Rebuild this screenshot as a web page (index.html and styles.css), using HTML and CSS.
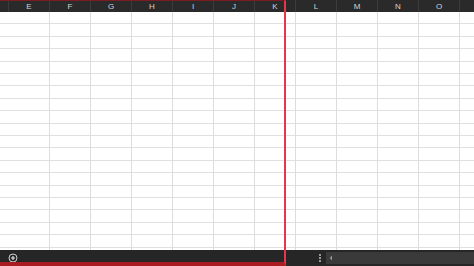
FILE: index.html
```html
<!DOCTYPE html>
<html>
<head>
<meta charset="utf-8">
<link rel="stylesheet" href="styles.css">
</head>
<body>
<div class="app">
  <div class="colhead">
    <div class="ch edge"></div>
    <div class="ch">E</div>
    <div class="ch">F</div>
    <div class="ch">G</div>
    <div class="ch">H</div>
    <div class="ch">I</div>
    <div class="ch">J</div>
    <div class="ch">K</div>
    <div class="ch">L</div>
    <div class="ch">M</div>
    <div class="ch">N</div>
    <div class="ch">O</div>
    <div class="ch tail"></div>
  </div>
  <div class="sheet"></div>
  <div class="statusbar">
    <div class="addsheet">
      <svg width="10" height="10" viewBox="0 0 10 10"><circle cx="5" cy="5" r="4" fill="none" stroke="#cfcfcf" stroke-width="1"/><path d="M5 3v4M3 5h4" stroke="#e8e8e8" stroke-width="1.1"/></svg>
    </div>
    <div class="spacer"></div>
    <div class="grip">
      <svg width="4" height="10" viewBox="0 0 4 10"><circle cx="2" cy="2" r="0.9" fill="#d0d0d0"/><circle cx="2" cy="5" r="0.9" fill="#d0d0d0"/><circle cx="2" cy="8" r="0.9" fill="#d0d0d0"/></svg>
    </div>
    <div class="hscroll">
      <div class="arrow">
        <svg width="4" height="6" viewBox="0 0 4 6"><path d="M3 0.5L0.8 3L3 5.5Z" fill="#9a9a9a"/></svg>
      </div>
    </div>
  </div>
  <div class="frame"></div>
</div>
</body>
</html>
```
FILE: styles.css
```css
html, body {
  margin: 0;
  padding: 0;
  background: #ffffff;
}
.app {
  position: relative;
  width: 474px;
  height: 266px;
  overflow: hidden;
  display: flex;
  flex-direction: column;
  font-family: "Liberation Sans", "Noto Sans", sans-serif;
}
.colhead {
  height: 12px;
  flex: 0 0 12px;
  display: flex;
  background: #2a2a2a;
}
.ch {
  flex: 0 0 41px;
  box-sizing: border-box;
  border-right: 1px solid #3c3c3c;
  color: #d4d4d4;
  font-size: 8px;
  line-height: 13px;
  text-align: center;
}
.ch.edge {
  flex: 0 0 9px;
}
.ch.tail {
  flex: 1 1 auto;
  border-right: none;
}
.sheet {
  flex: 1 1 auto;
  background-color: #ffffff;
  background-image:
    repeating-linear-gradient(to right, transparent 0, transparent 40px, #dcdcdc 40px, #dcdcdc 41px),
    repeating-linear-gradient(to bottom, transparent 0, transparent 11.4px, #e0e0e0 11.4px, #e0e0e0 12.4px);
  background-position: 9px 0, 0 0;
}
.statusbar {
  flex: 0 0 16px;
  height: 16px;
  display: flex;
  align-items: flex-start;
  background: #262626;
}
.addsheet {
  width: 10px;
  height: 10px;
  margin: 3px 0 0 8px;
  display: flex;
}
.spacer {
  flex: 1 1 auto;
}
.grip {
  width: 4px;
  height: 10px;
  margin: 3px 4px 0 0;
  display: flex;
}
.hscroll {
  width: 148px;
  height: 12px;
  margin-top: 2px;
  background: #3a3a3a;
  display: flex;
  align-items: center;
}
.arrow {
  margin-left: 3px;
  width: 4px;
  height: 6px;
  display: flex;
}
.frame {
  position: absolute;
  left: -3px;
  top: 0;
  width: 289px;
  height: 266px;
  box-sizing: border-box;
  border-top: 1px solid #7a1c22;
  border-left: 2px solid #c8202c;
  border-right: 2px solid #e8344c;
  border-bottom: 4px solid #a81c22;
}
```
